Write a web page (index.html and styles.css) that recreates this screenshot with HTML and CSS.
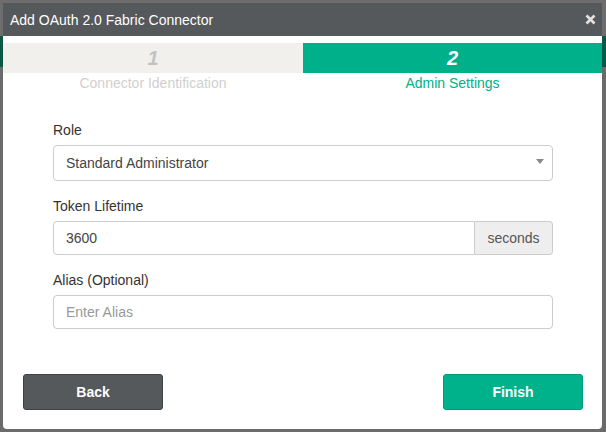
FILE: index.html
```html
<!DOCTYPE html>
<html>
<head>
<meta charset="utf-8">
<link rel="stylesheet" href="styles.css">
</head>
<body>
<div class="modal">
  <div class="header">
    <span class="title">Add OAuth 2.0 Fabric Connector</span>
    <svg class="close" width="11" height="11" viewBox="0 0 11 11"><path d="M1.5 1.5 L9.5 9.5 M9.5 1.5 L1.5 9.5" stroke="#e2e2e2" stroke-width="2.6" stroke-linecap="butt"/></svg>
  </div>
  <div class="steps">
    <div class="step">
      <div class="num">1</div>
      <div class="label">Connector Identification</div>
    </div>
    <div class="step active">
      <div class="num">2</div>
      <div class="label">Admin Settings</div>
    </div>
  </div>
  <div class="form">
    <div class="field-label first">Role</div>
    <div class="select">
      <span>Standard Administrator</span>
      <span class="caret"></span>
    </div>
    <div class="field-label">Token Lifetime</div>
    <div class="input-group">
      <div class="input">3600</div>
      <div class="addon">seconds</div>
    </div>
    <div class="field-label">Alias (Optional)</div>
    <div class="input placeholder">Enter Alias</div>
  </div>
  <div class="footer">
    <div class="btn back">Back</div>
    <div class="btn finish">Finish</div>
  </div>
</div>
</body>
</html>
```
FILE: styles.css
```css
* { box-sizing: border-box; }
html, body { margin: 0; height: 100%; }
body {
  font-family: "Liberation Sans", Arial, sans-serif;
  font-size: 14px;
  color: #333;
  padding: 3px 4px 3px 3px;
  background: linear-gradient(to bottom, #6d6d6d 36px, #0b5846 36px, #0b5846 67px, #6b6b6b 67px);
}
.modal {
  width: 599px;
  height: 426px;
  background: #fff;
  border-radius: 0 0 4px 4px;
  display: flex;
  flex-direction: column;
}
.header {
  height: 33px;
  background: #56595b;
  display: flex;
  align-items: center;
  justify-content: space-between;
  padding: 0 6px 0 7px;
}
.title { color: #fff; font-size: 14px; }
.close { display: block; margin-top: -1px; }
.steps {
  margin-top: 7px;
  display: grid;
  grid-template-columns: 300px 1fr;
}
.step { text-align: center; }
.num {
  height: 30px;
  line-height: 30px;
  background: #f1f0ed;
  color: #c2c2c2;
  font-weight: bold;
  font-style: italic;
  font-size: 20px;
}
.label { color: #cfcfcf; line-height: 20px; }
.step.active .num { background: #00b08a; color: #fff; }
.step.active .label { color: #00b08a; }
.form { padding: 0 49px 0 50px; }
.field-label { line-height: 20px; margin: 15px 0 5px; color: #333; }
.field-label.first { margin-top: 27px; }
.select {
  height: 36px;
  border: 1px solid #ccc;
  border-radius: 4px;
  display: flex;
  align-items: center;
  justify-content: space-between;
  padding: 0 8px 0 12px;
  color: #444;
}
.caret {
  width: 0; height: 0;
  border-left: 4px solid transparent;
  border-right: 4px solid transparent;
  border-top: 5px solid #888;
  margin-top: -3px;
}
.input-group { display: flex; }
.input {
  height: 34px;
  border: 1px solid #ccc;
  border-radius: 4px;
  display: flex;
  align-items: center;
  padding: 0 12px;
  color: #444;
}
.input-group .input { flex: 1; border-radius: 4px 0 0 4px; }
.addon {
  width: 78px;
  height: 34px;
  border: 1px solid #ccc;
  border-left: none;
  border-radius: 0 4px 4px 0;
  background: #eee;
  display: flex;
  align-items: center;
  justify-content: center;
  color: #555;
}
.input.placeholder { color: #999; }
.footer {
  margin-top: auto;
  display: flex;
  justify-content: space-between;
  padding: 0 19px 19px 20px;
}
.btn {
  width: 140px;
  height: 36px;
  border-radius: 3px;
  display: flex;
  align-items: center;
  justify-content: center;
  color: #fff;
  font-weight: bold;
  padding-bottom: 1px;
}
.back { background: #55595c; border: 1px solid #3d4143; }
.finish { background: #00b28b; border: 1px solid #009b78; }
```
